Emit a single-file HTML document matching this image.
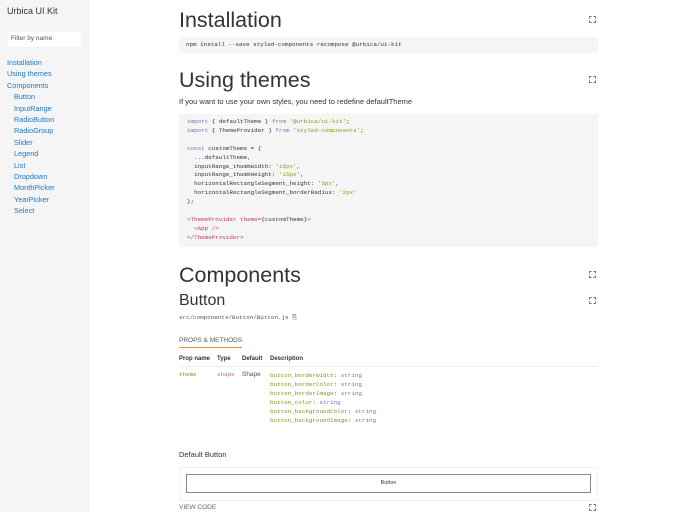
<!DOCTYPE html><html><head><meta charset="utf-8"><style>
*{margin:0;padding:0;box-sizing:border-box}
body{width:688px;height:512px;overflow:hidden;background:#fff;font-family:"Liberation Sans",sans-serif;color:#333;position:relative}
.a{position:absolute;white-space:nowrap}
#sb{position:absolute;left:0;top:0;width:90px;height:512px;background:#f5f5f5}
.nav{font-size:7.3px;color:#1978c8;line-height:11.4px}
.mono{font-family:"Liberation Mono",monospace}
h1{font-weight:400;font-size:21.5px;color:#333}
.code{background:#f5f5f5;border-radius:2px}
.k{color:#8a6ab0}.s{color:#8a9a20}.t{color:#d03050}
.ic{width:7px;height:7px;border:1px dashed #777}
.cl{font-family:"Liberation Mono",monospace;font-size:5.9px;line-height:8.9px;color:#333}
.th{font-size:6px;font-weight:bold;color:#333}
</style></head><body>
<div id="sb">
<div class="a" style="left:7px;top:6px;font-size:9px;color:#333">Urbica UI Kit</div>
<div class="a" style="left:8px;top:32px;width:73px;height:15px;background:#fff;font-size:6.5px;color:#555;padding:3px 3px">Filter by name</div>
<div class="a nav" style="left:7px;top:57px">Installation<br>Using themes<br>Components<br>
<div style="padding-left:7px">Button<br>InputRange<br>RadioButton<br>RadioGroup<br>Slider<br>Legend<br>List<br>Dropdown<br>MonthPicker<br>YearPicker<br>Select</div></div>
</div>
<h1 class="a" style="left:179px;top:8px">Installation</h1>
<div class="a ic" style="left:589px;top:16px"></div>
<div class="a code mono" style="left:179px;top:37px;width:419px;height:16px;font-size:5.9px;padding:4px 7px">npm install --save styled-components recompose @urbica/ui-kit</div>
<h1 class="a" style="left:179px;top:68px">Using themes</h1>
<div class="a ic" style="left:589px;top:76px"></div>
<div class="a" style="left:179px;top:97px;font-size:7.5px">If you want to use your own styles, you need to redefine defaultTheme</div>
<div class="a code" style="left:179px;top:114px;width:419px;height:133px"></div>
<div class="a cl" style="left:187px;top:118px"><span class="k">import</span> { defaultTheme } <span class="k">from</span> <span class="s">'@urbica/ui-kit'</span>;<br><span class="k">import</span> { ThemeProvider } <span class="k">from</span> <span class="s">'styled-components'</span>;<br><br><span class="k">const</span> customTheme = {<br>&nbsp;&nbsp;...defaultTheme,<br>&nbsp;&nbsp;inputRange_thumbWidth: <span class="s">'15px'</span>,<br>&nbsp;&nbsp;inputRange_thumbHeight: <span class="s">'15px'</span>,<br>&nbsp;&nbsp;horizontalRectangleSegment_height: <span class="s">'3px'</span>,<br>&nbsp;&nbsp;horizontalRectangleSegment_borderRadius: <span class="s">'2px'</span><br>};<br><br><span class="t">&lt;ThemeProvider theme=</span>{customTheme}<span class="t">&gt;</span><br>&nbsp;&nbsp;<span class="t">&lt;App /&gt;</span><br><span class="t">&lt;/ThemeProvider&gt;</span></div>
<h1 class="a" style="left:179px;top:263px">Components</h1>
<div class="a ic" style="left:589px;top:271px"></div>
<div class="a" style="left:179px;top:292px;font-size:16px">Button</div>
<div class="a ic" style="left:589px;top:297px"></div>
<div class="a mono" style="left:179px;top:314px;font-size:5.9px;color:#555">src/components/Button/Button.js &#x2398;</div>
<div class="a" style="left:179px;top:337px;font-size:6.5px;color:#555">PROPS &amp; METHODS</div>
<div class="a" style="left:179px;top:347px;width:63px;height:1px;background:#e89030"></div>
<div class="a th" style="left:179px;top:356px">Prop name</div>
<div class="a th" style="left:217px;top:356px">Type</div>
<div class="a th" style="left:242px;top:356px">Default</div>
<div class="a th" style="left:270px;top:356px">Description</div>
<div class="a" style="left:179px;top:366px;width:419px;height:1px;background:#eee"></div>
<div class="a mono" style="left:179px;top:371px;font-size:5.9px;color:#7a9a20">theme</div>
<div class="a mono" style="left:217px;top:371px;font-size:5.9px;color:#b07090">shape</div>
<div class="a" style="left:242px;top:371px;font-size:6.5px;color:#555">Shape</div>
<div class="a cl" style="left:270px;top:371px;line-height:9.1px;color:#7a9a20">button_borderWidth<span style="color:#555">: </span><span class="k">string</span><br>button_borderColor<span style="color:#555">: </span><span class="k">string</span><br>button_borderImage<span style="color:#555">: </span><span class="k">string</span><br>button_color<span style="color:#555">: </span><span class="k">string</span><br>button_backgroundColor<span style="color:#555">: </span><span class="k">string</span><br>button_backgroundImage<span style="color:#555">: </span><span class="k">string</span></div>
<div class="a" style="left:179px;top:450px;font-size:7.5px">Default Button</div>
<div class="a" style="left:179px;top:467px;width:419px;height:34px;border:1px solid #f0f0f0;border-radius:2px"></div>
<div class="a" style="left:186px;top:474px;width:405px;height:19px;border:1px solid #888;font-size:5.5px;text-align:center;line-height:17px">Button</div>
<div class="a" style="left:179px;top:504px;font-size:6.5px;color:#666">VIEW CODE</div>
<div class="a ic" style="left:589px;top:504px"></div>
</body></html>
